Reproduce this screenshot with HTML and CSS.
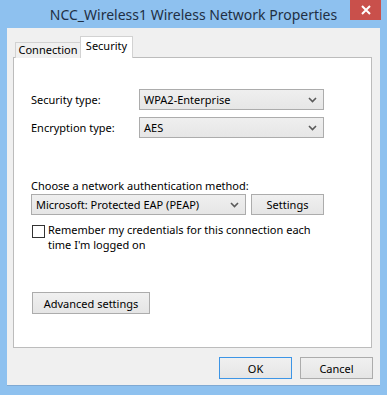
FILE: index.html
```html
<!DOCTYPE html>
<html>
<head>
<meta charset="utf-8">
<link rel="stylesheet" href="styles.css">
</head>
<body>
<div class="window">
  <div class="titlebar">
    <div class="title">NCC_Wireless1 Wireless Network Properties</div>
    <div class="close">
      <svg width="10" height="10" viewBox="0 0 10 10"><path d="M1 1 L9 9 M9 1 L1 9" stroke="#fff" stroke-width="2" fill="none"/></svg>
    </div>
  </div>
  <div class="client">
    <div class="tabs">
      <div class="tab">Connection</div>
      <div class="tab active">Security</div>
    </div>
    <div class="panel">
      <div class="fields">
        <span class="label">Security type:</span>
        <div class="combo"><span>WPA2-Enterprise</span><svg class="chev" width="9" height="6" viewBox="0 0 9 6"><path d="M1 1 L4.5 4.5 L8 1" stroke="#5a5a5a" stroke-width="1.6" fill="none"/></svg></div>
        <span class="label">Encryption type:</span>
        <div class="combo"><span>AES</span><svg class="chev" width="9" height="6" viewBox="0 0 9 6"><path d="M1 1 L4.5 4.5 L8 1" stroke="#5a5a5a" stroke-width="1.6" fill="none"/></svg></div>
      </div>
      <div class="auth-label">Choose a network authentication method:</div>
      <div class="auth-row">
        <div class="combo wide"><span>Microsoft: Protected EAP (PEAP)</span><svg class="chev" width="9" height="6" viewBox="0 0 9 6"><path d="M1 1 L4.5 4.5 L8 1" stroke="#5a5a5a" stroke-width="1.6" fill="none"/></svg></div>
        <div class="btn settings">Settings</div>
      </div>
      <div class="check-row">
        <span class="checkbox"></span>
        <span class="check-text">Remember my credentials for this connection each<br>time I'm logged on</span>
      </div>
      <div class="btn adv">Advanced settings</div>
    </div>
    <div class="footer">
      <div class="btn default">OK</div>
      <div class="btn">Cancel</div>
    </div>
  </div>
</div>
</body>
</html>
```
FILE: styles.css
```css
* { box-sizing: border-box; }
html, body { margin: 0; padding: 0; }
body {
  background: #8ec1ef;
  font-family: "Noto Sans", "Open Sans", sans-serif;
  font-size: 11px;
  color: #000;
}
.window {
  width: 387px;
  height: 395px;
  display: flex;
  flex-direction: column;
  background: #8ec1ef;
  position: relative;
}
.titlebar {
  height: 28px;
  flex: none;
  display: flex;
  align-items: center;
  justify-content: center;
}
.title {
  font-size: 14px;
  color: #1f2f44;
}
.close {
  position: absolute;
  left: 350px;
  top: 0;
  width: 31px;
  height: 20px;
  background: #c9504b;
  display: flex;
  align-items: center;
  justify-content: center;
}
.client {
  margin: 0 7px 9px 7px;
  height: 358px;
  background: #f0f0f0;
  padding-top: 8px;
  display: flex;
  flex-direction: column;
  border-bottom: 1px solid #7fa9d3;
}
.tabs {
  display: flex;
  align-items: flex-end;
  margin-left: 8px;
  height: 22px;
  margin-bottom: -1px;
  position: relative;
  z-index: 1;
}
.tab {
  height: 16px;
  width: 65px;
  border: 1px solid #d2d2d2;
  border-bottom: none;
  border-right: none;
  background: #f0f0f0;
  display: flex;
  align-items: center;
  justify-content: center;
  line-height: 13px;
  padding-bottom: 2px;
}
.tab.active {
  height: 22px;
  width: 53px;
  background: #fff;
  border-right: 1px solid #d2d2d2;
  padding-bottom: 5px;
}
.panel {
  margin: 0 8px 0 6px;
  height: 291px;
  background: #fff;
  border: 1px solid #bcbcbc;
  padding: 31px 0 0 17px;
  flex: none;
}
.fields {
  display: grid;
  grid-template-columns: 108px 185px;
  row-gap: 7px;
  align-items: center;
}
.combo {
  height: 21px;
  border: 1px solid #acacac;
  background: linear-gradient(#efefef, #e6e6e6);
  display: flex;
  align-items: center;
  justify-content: space-between;
  padding: 0 6px 0 4px;
}
.chev { flex: none; }
.auth-label {
  margin-top: 40px;
  line-height: 15px;
}
.auth-row {
  display: flex;
  gap: 5px;
  margin-top: 1px;
}
.combo.wide { width: 215px; }
.btn {
  height: 22px;
  border: 1px solid #acacac;
  background: linear-gradient(#f0f0f0, #e5e5e5);
  display: flex;
  align-items: center;
  justify-content: center;
}
.settings { width: 73px; height: 21px; }
.check-row {
  display: flex;
  align-items: flex-start;
  margin-top: 7px;
  margin-left: 1px;
}
.checkbox {
  width: 13px;
  height: 13px;
  border: 1px solid #333;
  background: #fff;
  margin-top: 3px;
  margin-right: 3px;
  flex: none;
}
.check-text { line-height: 15px; }
.adv {
  width: 118px;
  margin-top: 40px;
  margin-left: 1px;
}
.footer {
  display: flex;
  justify-content: flex-end;
  gap: 8px;
  padding-right: 7px;
  margin-top: 9px;
}
.footer .btn { width: 73px; }
.btn.default { border-color: #3d95e6; }
```
